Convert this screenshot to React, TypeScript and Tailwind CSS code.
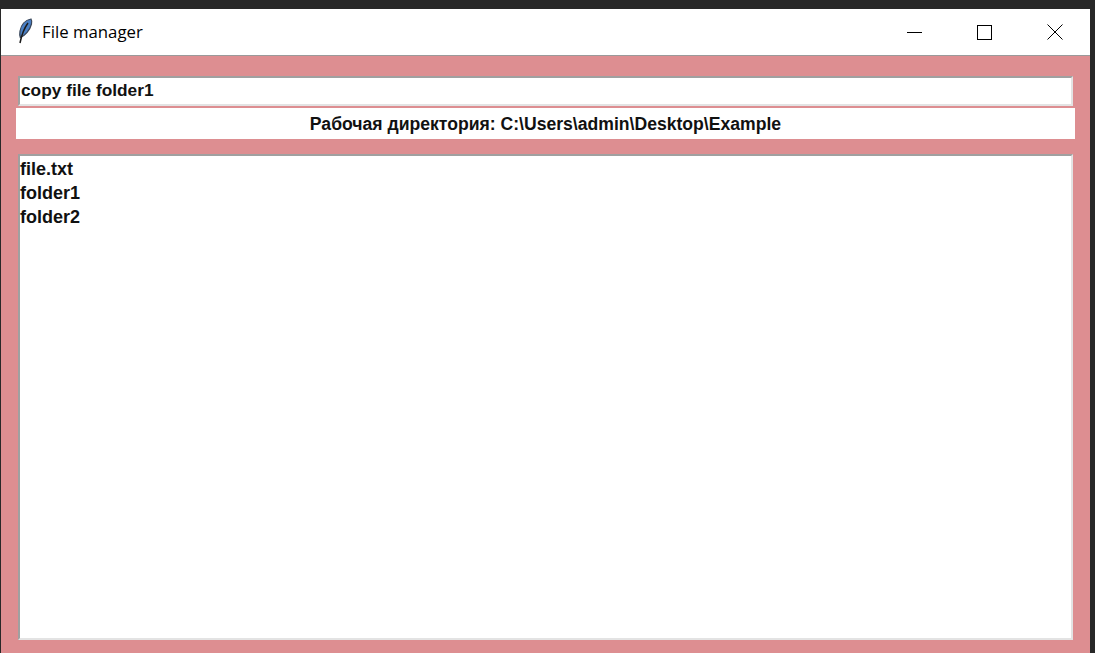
export default function App() {
  return (
    <div className="w-[1095px] h-[653px] overflow-hidden bg-[#282828] pt-[9px] pl-[1px] pr-[5px] font-['Liberation_Sans',sans-serif] text-[#111]">
      <div className="flex flex-col h-[644px] bg-[#dd8e91]">
        <div className="flex items-center h-[47px] bg-white border-b border-[#9a9a9a] shrink-0">
          <svg width="18" height="26" viewBox="0 0 18 26" className="ml-[15px] mt-[-2px]">
            <path d="M15 1C9 2 5 7 4 13c-.5 3-.3 5 .3 6.500C9 18 14 12 15.500 6c.4-2 .2-4-.5-5Z" fill="#4a7fc4" stroke="#3a4658" strokeWidth="1.200" />
            <path d="M12 5C9 9 6 15 4 25" stroke="#1c1c1c" strokeWidth="1.500" fill="none" />
          </svg>
          <span className="ml-[8px] text-[16.800px] text-black font-['Open_Sans',sans-serif] leading-none">File manager</span>
          <div className="ml-auto flex items-center mr-[-1px]">
            <div className="w-[70px] flex justify-center">
              <div className="w-[15px] h-[1px] bg-black" />
            </div>
            <div className="w-[71px] flex justify-center">
              <div className="w-[15px] h-[15px] border border-black" />
            </div>
            <div className="w-[71px] flex justify-center pr-[2px]">
              <svg width="16" height="16" viewBox="0 0 16 16">
                <path d="M.5.500l15 15M15.500.500l-15 15" stroke="#000" strokeWidth="1" fill="none" />
              </svg>
            </div>
          </div>
        </div>
        <div className="flex-1 flex flex-col px-[15px] pt-[20px] pb-[13px]">
          <div className="mx-[2px] h-[30px] bg-white border-t-2 border-l-2 border-[#a0a0a0] border-r-2 border-b-2 border-r-[#e3e3e3] border-b-[#e3e3e3] flex items-center pl-[1px] text-[17.300px] font-bold leading-none">
            copy file folder1
          </div>
          <div className="mt-[2px] h-[31px] bg-white flex items-center justify-center pt-[2px] text-[17.600px] font-bold leading-none">
            Рабочая директория: C:\Users\admin\Desktop\Example
          </div>
          <div className="mt-[15px] mx-[2px] flex-1 bg-white border-t-2 border-l-2 border-[#a0a0a0] border-r-2 border-b-2 border-r-[#e3e3e3] border-b-[#e3e3e3] pt-[1px] text-[18px] font-bold">
            <div className="h-[24px] leading-[24px]">file.txt</div>
            <div className="h-[24px] leading-[24px]">folder1</div>
            <div className="h-[24px] leading-[24px]">folder2</div>
          </div>
        </div>
      </div>
    </div>
  );
}
